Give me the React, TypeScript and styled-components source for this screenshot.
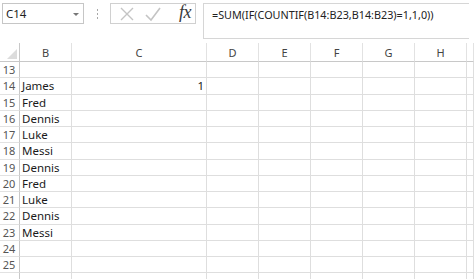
import { Fragment } from "react";
import styled, { createGlobalStyle } from "styled-components";

const GlobalStyle = createGlobalStyle`
  html, body {
    margin: 0;
    padding: 0;
    background: #ffffff;
    overflow: hidden;
  }
`;

const Page = styled.div`
  width: 474px;
  height: 279px;
  overflow: hidden;
  background: #ffffff;
  font-family: "Noto Sans", "Open Sans", sans-serif;
`;

const TopBar = styled.div`
  display: flex;
  align-items: flex-start;
  height: 43px;
  padding: 3px 5px 0 2px;
  box-sizing: border-box;
`;

const NameBox = styled.div`
  width: 82px;
  height: 21px;
  box-sizing: border-box;
  border: 1px solid #c6c6c6;
  display: flex;
  align-items: center;
  justify-content: space-between;
  padding: 0 4px 0 3px;
  font-size: 11.5px;
  color: #222;
`;

const Arrow = styled.span`
  width: 0;
  height: 0;
  border-left: 3px solid transparent;
  border-right: 3px solid transparent;
  border-top: 3px solid #777;
  margin-top: 1px;
`;

const Grip = styled.div`
  width: 26px;
  height: 21px;
  display: flex;
  flex-direction: column;
  align-items: center;
  justify-content: center;
  gap: 2px;
`;

const Dot = styled.span`
  width: 1px;
  height: 2px;
  background: #a8a8a8;
`;

const ButtonBox = styled.div`
  width: 86px;
  height: 21px;
  box-sizing: border-box;
  border: 1px solid #d0d0d0;
  display: flex;
  align-items: center;
  padding: 0 4px 0 8px;
  gap: 9px;
`;

const Fx = styled.span`
  font-family: "Liberation Serif", "DejaVu Serif", serif;
  font-style: italic;
  font-size: 18px;
  color: #3a3a3a;
  margin-left: auto;
  margin-top: -3px;
  letter-spacing: -0.5px;
`;

const FormulaInput = styled.div`
  flex: 1;
  margin-left: 7px;
  height: 36px;
  box-sizing: border-box;
  border: 1px solid #d6d6d6;
  border-right: none;
  padding: 3px 0 0 8px;
  font-size: 10.8px;
  color: #222;
`;

const Sheet = styled.div`
  display: grid;
  grid-template-columns: 20px 52px 135px repeat(5, 52px) 1fr;
  grid-template-rows: 19px repeat(14, 16.25px);
`;

const HeadCell = styled.div<{ $corner?: boolean }>`
  position: relative;
  box-sizing: border-box;
  border-right: 1px solid ${(p) => (p.$corner ? "#c8c8c8" : "#e2e2e2")};
  border-bottom: 1px solid #c8c8c8;
  display: flex;
  align-items: center;
  justify-content: center;
  font-size: 11px;
  color: #444;
`;

const Corner = styled.span`
  position: absolute;
  right: 2px;
  bottom: 2px;
  width: 0;
  height: 0;
  border-left: 10px solid transparent;
  border-bottom: 10px solid #dcdcdc;
`;

const RowNum = styled.div`
  box-sizing: border-box;
  border-right: 1px solid #c8c8c8;
  border-bottom: 1px solid #e2e2e2;
  display: flex;
  align-items: center;
  justify-content: center;
  font-size: 11px;
  color: #555;
  padding-right: 1px;
`;

const Cell = styled.div<{ $right?: boolean }>`
  box-sizing: border-box;
  border-right: 1px solid #dedede;
  border-bottom: 1px solid #dedede;
  display: flex;
  align-items: center;
  justify-content: ${(p) => (p.$right ? "flex-end" : "flex-start")};
  padding: 0 2px;
  font-size: 11.5px;
  color: #1a1a1a;
  white-space: nowrap;
  overflow: hidden;
`;

const columns = ["B", "C", "D", "E", "F", "G", "H", ""];

const names: Record<number, string> = {
  14: "James",
  15: "Fred",
  16: "Dennis",
  17: "Luke",
  18: "Messi",
  19: "Dennis",
  20: "Fred",
  21: "Luke",
  22: "Dennis",
  23: "Messi",
};

const rows = Array.from({ length: 14 }, (_, i) => 13 + i);

const App = () => {
  return (
    <Page>
      <GlobalStyle />
      <TopBar>
        <NameBox>
          C14
          <Arrow />
        </NameBox>
        <Grip>
          <Dot />
          <Dot />
          <Dot />
        </Grip>
        <ButtonBox>
          <svg width="16" height="16" viewBox="0 0 16 16">
            <path d="M2 2 L14 14 M14 2 L2 14" stroke="#c4c4c4" strokeWidth="1.4" fill="none" />
          </svg>
          <svg width="18" height="16" viewBox="0 0 18 16">
            <path d="M2 9 L7 14 L16 2" stroke="#c4c4c4" strokeWidth="1.6" fill="none" />
          </svg>
          <Fx>fx</Fx>
        </ButtonBox>
        <FormulaInput>=SUM(IF(COUNTIF(B14:B23,B14:B23)=1,1,0))</FormulaInput>
      </TopBar>
      <Sheet>
        <HeadCell $corner>
          <Corner />
        </HeadCell>
        {columns.map((c, i) => (
          <HeadCell key={i}>{c}</HeadCell>
        ))}
        {rows.map((r) => (
          <Fragment key={r}>
            <RowNum>{r < 26 ? r : ""}</RowNum>
            {columns.map((c, i) => (
              <Cell key={i} $right={c === "C"}>
                {c === "B" ? names[r] ?? "" : c === "C" && r === 14 ? "1" : ""}
              </Cell>
            ))}
          </Fragment>
        ))}
      </Sheet>
    </Page>
  );
};

export default App;
